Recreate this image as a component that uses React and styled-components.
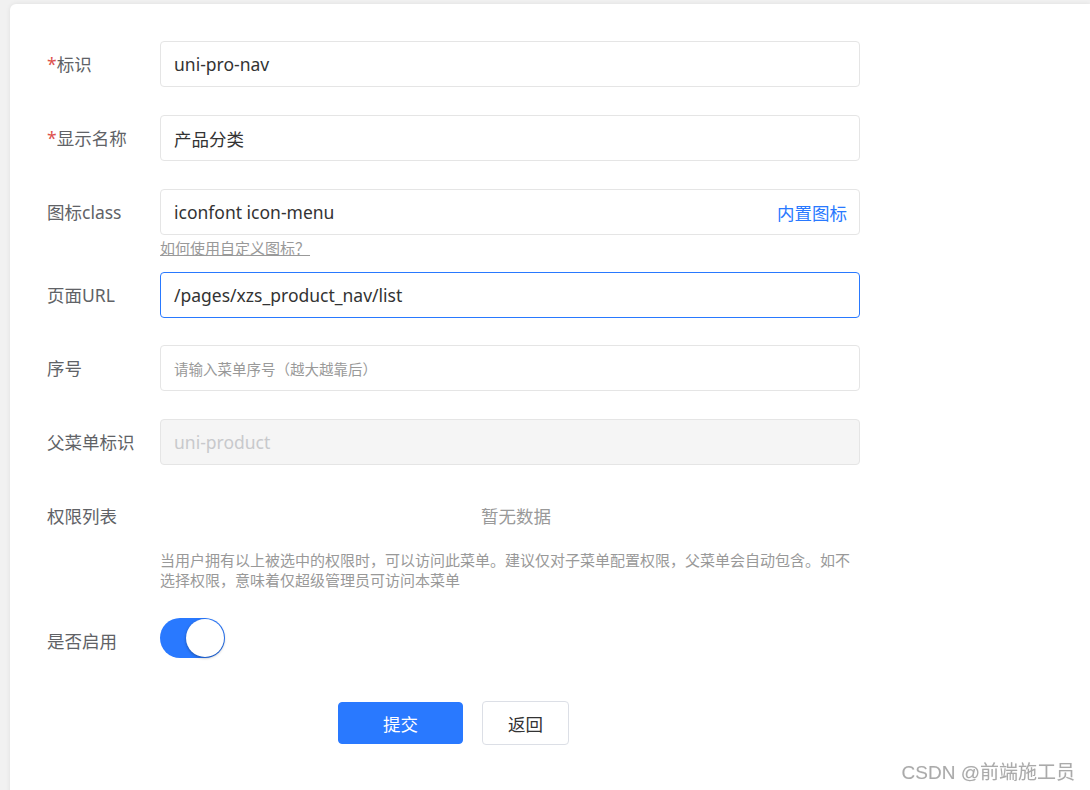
import React from "react";
import styled, { createGlobalStyle } from "styled-components";

const GlobalStyle = createGlobalStyle`
  html, body {
    margin: 0;
    padding: 0;
    background: #f1f1f1;
    font-family: "Noto Sans", "Noto Sans CJK SC", sans-serif;
  }
  * { box-sizing: border-box; }
`;

const Page = styled.div`
  padding: 4px 0 0 10px;
  min-height: 790px;
  overflow: hidden;
`;

const Card = styled.div`
  background: #fff;
  border-radius: 6px 0 0 0;
  box-shadow: 0 0 5px rgba(0, 0, 0, 0.08);
  padding: 37px 0 60px 37px;
  min-height: 800px;
`;

const Form = styled.div`
  width: 813px;
`;

const FormItem = styled.div`
  display: flex;
  align-items: flex-start;
  margin-bottom: ${(p) => p.$mb ?? 28}px;
`;

const Label = styled.div`
  width: 113px;
  flex-shrink: 0;
  height: 46px;
  line-height: 46px;
  font-size: 17.5px;
  color: #606266;
  white-space: nowrap;
`;

const Required = styled.span`
  color: #dd524d;
`;

const Content = styled.div`
  width: 700px;
`;

const InputBox = styled.div`
  display: flex;
  align-items: center;
  height: 46px;
  border: 1px solid ${(p) => (p.$focused ? "#2979ff" : "#e5e5e5")};
  border-radius: 4px;
  background: ${(p) => (p.$disabled ? "#f5f5f5" : "#fff")};
  padding: 0 12px 0 13px;
`;

const InputText = styled.span`
  flex: 1;
  font-size: ${(p) => (p.$placeholder ? "14.5px" : "17.5px")};
  color: ${(p) =>
    p.$disabled ? "#c8c9cc" : p.$placeholder ? "#999" : "#333"};
  white-space: nowrap;
`;

const Suffix = styled.span`
  font-size: 17.5px;
  color: #2979ff;
`;

const HelpLink = styled.a`
  display: block;
  width: max-content;
  margin-top: 3px;
  font-size: 15px;
  line-height: 20px;
  height: 20px;
  color: #999;
  text-decoration: underline;
`;

const Empty = styled.div`
  height: 46px;
  line-height: 46px;
  text-align: center;
  padding-left: 12px;
  font-size: 17.5px;
  color: #999;
`;

const Hint = styled.div`
  margin: -17px 0 28px 113px;
  width: 700px;
  font-size: 15px;
  line-height: 20px;
  color: #999;
`;

const Switch = styled.div`
  position: relative;
  width: 65px;
  height: 40px;
  border-radius: 20px;
  background: #2979ff;
`;

const Knob = styled.div`
  position: absolute;
  top: 1px;
  right: 1px;
  width: 38px;
  height: 38px;
  border-radius: 50%;
  background: #fff;
  box-shadow: 0 1px 3px rgba(0, 0, 0, 0.35);
`;

const ButtonRow = styled.div`
  display: flex;
  align-items: center;
  gap: 19px;
  margin: 37px 0 0 291px;
`;

const Button = styled.button`
  height: ${(p) => (p.$primary ? 42 : 44)}px;
  width: ${(p) => (p.$primary ? 125 : 87)}px;
  border-radius: 4px;
  border: 1px solid ${(p) => (p.$primary ? "#2979ff" : "#dcdfe6")};
  background: ${(p) => (p.$primary ? "#2979ff" : "#fff")};
  color: ${(p) => (p.$primary ? "#fff" : "#333")};
  font-family: inherit;
  font-size: 17.5px;
  padding: 0;
  cursor: pointer;
`;

const Watermark = styled.div`
  position: fixed;
  right: 15px;
  bottom: 6px;
  font-family: "Liberation Sans", "Noto Sans CJK SC", sans-serif;
  font-size: 19px;
  color: #aaa;
  text-shadow: 0 0 1px rgba(0, 0, 0, 0.1);
`;

function Field({ label, required, children, mb }) {
  return (
    <FormItem $mb={mb}>
      <Label>
        {required && <Required>*</Required>}
        {label}
      </Label>
      <Content>{children}</Content>
    </FormItem>
  );
}

export default function App() {
  return (
    <>
      <GlobalStyle />
      <Page>
        <Card>
          <Form>
            <Field label="标识" required>
              <InputBox>
                <InputText>uni-pro-nav</InputText>
              </InputBox>
            </Field>
            <Field label="显示名称" required>
              <InputBox>
                <InputText>产品分类</InputText>
              </InputBox>
            </Field>
            <Field label="图标class" mb={14}>
              <InputBox>
                <InputText>iconfont icon-menu</InputText>
                <Suffix>内置图标</Suffix>
              </InputBox>
              <HelpLink>如何使用自定义图标？</HelpLink>
            </Field>
            <Field label="页面URL" mb={27}>
              <InputBox $focused>
                <InputText>/pages/xzs_product_nav/list</InputText>
              </InputBox>
            </Field>
            <Field label="序号">
              <InputBox>
                <InputText $placeholder>请输入菜单序号（越大越靠后）</InputText>
              </InputBox>
            </Field>
            <Field label="父菜单标识">
              <InputBox $disabled>
                <InputText $disabled>uni-product</InputText>
              </InputBox>
            </Field>
            <Field label="权限列表">
              <Empty>暂无数据</Empty>
            </Field>
            <Hint>
              当用户拥有以上被选中的权限时，可以访问此菜单。建议仅对子菜单配置权限，父菜单会自动包含。如不选择权限，意味着仅超级管理员可访问本菜单
            </Hint>
            <Field label="是否启用" mb={0}>
              <Switch>
                <Knob />
              </Switch>
            </Field>
            <ButtonRow>
              <Button $primary>提交</Button>
              <Button>返回</Button>
            </ButtonRow>
          </Form>
        </Card>
      </Page>
      <Watermark>CSDN @前端施工员</Watermark>
    </>
  );
}
